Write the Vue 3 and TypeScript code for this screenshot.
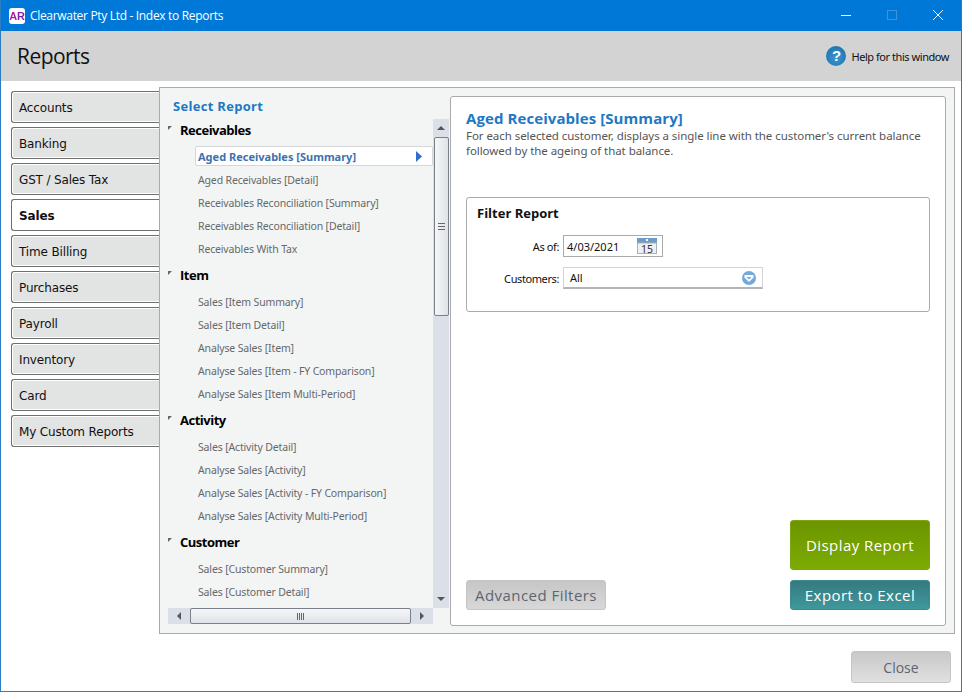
<script setup lang="ts">
const tabs = ['Accounts','Banking','GST / Sales Tax','Sales','Time Billing','Purchases','Payroll','Inventory','Card','My Custom Reports']
const groups = [
  { name: 'Receivables', items: ['Aged Receivables [Summary]','Aged Receivables [Detail]','Receivables Reconciliation [Summary]','Receivables Reconciliation [Detail]','Receivables With Tax'] },
  { name: 'Item', items: ['Sales [Item Summary]','Sales [Item Detail]','Analyse Sales [Item]','Analyse Sales [Item - FY Comparison]','Analyse Sales [Item Multi-Period]'] },
  { name: 'Activity', items: ['Sales [Activity Detail]','Analyse Sales [Activity]','Analyse Sales [Activity - FY Comparison]','Analyse Sales [Activity Multi-Period]'] },
  { name: 'Customer', items: ['Sales [Customer Summary]','Sales [Customer Detail]'] },
]
</script>

<template>
  <div class="window">
    <header class="titlebar">
      <span class="logo"><span class="logo-text">AR</span></span>
      <span class="title">Clearwater Pty Ltd - Index to Reports</span>
      <div class="controls">
        <svg class="ctl" width="46" height="31" viewBox="0 0 46 31"><path d="M18 15.5H28" stroke="#fff" fill="none"/></svg>
        <svg class="ctl" width="46" height="31" viewBox="0 0 46 31"><rect x="18.5" y="10.5" width="9" height="9" stroke="#3a93df" fill="none"/></svg>
        <svg class="ctl" width="46" height="31" viewBox="0 0 46 31"><path d="M18 10L28 20M28 10L18 20" stroke="#fff" fill="none"/></svg>
      </div>
    </header>
    <div class="head">
      <h1 class="reports">Reports</h1>
      <div class="help">
        <span class="help-icon">?</span>
        <span class="help-text">Help for this window</span>
      </div>
    </div>
    <main class="main">
      <nav class="tabs">
        <div v-for="t in tabs" :key="t" class="tab" :class="{ active: t === 'Sales' }">{{ t }}</div>
      </nav>
      <section class="panel">
        <div class="left">
          <div class="select-title">Select Report</div>
          <div class="list-grid">
            <div class="list">
              <div v-for="g in groups" :key="g.name" class="group">
                <div class="group-head">
                  <svg class="tri" width="4" height="4" viewBox="0 0 4 4"><path d="M0 0H4L0 4Z" fill="#666"/></svg>
                  <span>{{ g.name }}</span>
                </div>
                <div v-for="i in g.items" :key="i" class="item" :class="{ sel: i === 'Aged Receivables [Summary]' }">
                  <span>{{ i }}</span>
                  <svg v-if="i === 'Aged Receivables [Summary]'" width="6" height="11" viewBox="0 0 6 11"><path d="M0 0L6 5.5L0 11Z" fill="#2f6fd0"/></svg>
                </div>
              </div>
            </div>
            <div class="vscroll">
              <div class="sbtn"><svg width="8" height="4" viewBox="0 0 8 4"><path d="M4 0L8 4H0Z" fill="#555"/></svg></div>
              <div class="vtrack">
                <div class="vthumb"><span class="grip-h"></span></div>
              </div>
              <div class="sbtn"><svg width="8" height="4" viewBox="0 0 8 4"><path d="M0 0H8L4 4Z" fill="#555"/></svg></div>
            </div>
            <div class="hscroll">
              <div class="hbtn"><svg width="4" height="8" viewBox="0 0 4 8"><path d="M4 0V8L0 4Z" fill="#555"/></svg></div>
              <div class="hthumb"><span class="grip-v"></span></div>
              <div class="hbtn"><svg width="4" height="8" viewBox="0 0 4 8"><path d="M0 0V8L4 4Z" fill="#555"/></svg></div>
            </div>
          </div>
        </div>
        <div class="card">
          <h2 class="card-title">Aged Receivables [Summary]</h2>
          <p class="card-desc">For each selected customer, displays a single line with the customer's current balance<br>followed by the ageing of that balance.</p>
          <div class="filter">
            <div class="filter-title">Filter Report</div>
            <div class="field">
              <label class="lbl">As of:</label>
              <div class="date">
                <span>4/03/2021</span>
                <svg class="cal" width="20" height="20" viewBox="0 0 20 20">
                  <rect x="0" y="2" width="20" height="16" fill="#eef0f2"/>
                  <rect x="0" y="2" width="20" height="5" fill="#6c9cc8"/>
                  <rect x="9" y="3" width="2" height="2" fill="#fff"/>
                  <rect x="0.5" y="7" width="19" height="10.5" fill="none" stroke="#a8b0b8"/>
                  <text x="10" y="16.5" text-anchor="middle" class="cal-num">15</text>
                </svg>
              </div>
            </div>
            <div class="field">
              <label class="lbl">Customers:</label>
              <div class="combo">
                <span>All</span>
                <svg width="14" height="14" viewBox="0 0 14 14">
                  <circle cx="7" cy="7" r="7" fill="#74a9de"/>
                  <path d="M2.5 4H11.5V6.5L7 11L2.5 6.5Z" fill="#fff"/>
                  <path d="M4.5 6H9.5L7 8.5Z" fill="#74a9de"/>
                </svg>
              </div>
            </div>
          </div>
          <div class="spacer"></div>
          <div class="actions">
            <button class="btn adv">Advanced Filters</button>
            <div class="actions-right">
              <button class="btn display">Display Report</button>
              <button class="btn excel">Export to Excel</button>
            </div>
          </div>
        </div>
      </section>
    </main>
    <footer class="foot">
      <button class="btn close">Close</button>
    </footer>
  </div>
</template>

<style>
html, body { margin: 0; padding: 0; background: #fff; }
</style>

<style scoped>
.window {
  width: 962px; height: 692px; box-sizing: border-box;
  border: 1px solid #2a7cc4; border-top: 0;
  display: flex; flex-direction: column; overflow: hidden;
  background: #fff; font-family: "Open Sans", sans-serif; color: #000;
}
.titlebar {
  height: 31px; margin: 0 -1px; background: #0078d7; color: #fff;
  display: flex; align-items: center; padding-left: 9px; flex: none;
}
.logo {
  width: 16px; height: 16px; background: #fff; border-radius: 3px;
  display: flex; align-items: center; justify-content: center;
}
.logo-text {
  font: bold 11px "Liberation Sans", sans-serif; letter-spacing: -0.3px;
  background: linear-gradient(90deg, #c0188f, #6a25c0); -webkit-background-clip: text; background-clip: text; color: transparent;
}
.title { margin-left: 5px; font-size: 12px; letter-spacing: -0.32px; }
.controls { margin-left: auto; display: flex; padding-right: 1px; }
.ctl { display: block; }
.head {
  height: 50px; background: #d3d3d3; display: flex; align-items: center;
  padding: 0 12px 0 16px; flex: none;
}
.reports { margin: 0; font-size: 21px; font-weight: 400; color: #111; letter-spacing: -0.55px; }
.help { margin-left: auto; display: flex; align-items: center; gap: 5px; }
.help-icon {
  width: 20px; height: 20px; border-radius: 50%; background: radial-gradient(circle at 50% 60%, #3e96d0, #136ca8);
  color: #fff; font: bold 15px "Liberation Sans", sans-serif; text-align: center; line-height: 20px;
}
.help-text { font: 11px "Noto Sans", sans-serif; letter-spacing: -0.45px; color: #111; }
.main { flex: none; display: flex; padding: 6px 0 0 10px; min-height: 0; }
.tabs { width: 149px; flex: none; padding-top: 4px; display: flex; flex-direction: column; gap: 4px; }
.tab {
  height: 32px; box-sizing: border-box; border: 1px solid #6f6f6f; border-right: 0;
  border-radius: 3px 0 0 3px; background: #e2e3e3; box-shadow: inset 0 1px 0 #fff, inset 1px 0 0 #fff, inset 0 -1px 0 #fff;
  padding: 0 0 0 7px; font: 12px/32px "DejaVu Sans", sans-serif; letter-spacing: -0.15px; color: #111;
}
.tab.active { background: #fff; font-weight: 700; }
.panel {
  width: 796px; height: 547px; flex: none; box-sizing: border-box; position: relative; margin-left: -1px;
  border: 1px solid #aaa; background: #f3f5f5;
  display: flex; padding: 8px 2px 7px 8px;
}
.left { width: 282px; flex: none; display: flex; flex-direction: column; }
.select-title { height: 19px; padding-left: 5px; font: 700 13px/21px "Open Sans", sans-serif; letter-spacing: 0.3px; color: #1f78c1; }
.list-grid {
  flex: 1; display: grid; grid-template-columns: 265px 16px; grid-template-rows: 493px 16px; min-height: 0;
}
.list { overflow: hidden; }
.group-head {
  height: 30px; display: flex; align-items: center; font: 700 13px "Open Sans", sans-serif; letter-spacing: -0.5px; color: #000;
}
.tri { margin-right: 8px; margin-top: -4px; }
.item {
  height: 23px; box-sizing: border-box; margin-left: 27px; padding-left: 3px; padding-right: 10px;
  display: flex; align-items: center; justify-content: space-between;
  font: 10.5px "Noto Sans", sans-serif; letter-spacing: -0.15px; color: #66686a;
}
.item.sel {
  background: #fff; border: 1px solid #d6d8d8; border-radius: 2px; font-weight: 700; font-size: 11px; letter-spacing: 0; color: #3d72ae; padding-left: 2px;
  height: 20px; margin: 1px 0 2px 27px;
}
.vscroll {
  margin-top: 4px; background: #dbe0e8; display: flex; flex-direction: column;
}
.sbtn { height: 18px; display: flex; align-items: center; justify-content: center; flex: none; }
.vtrack { flex: 1; }
.vthumb {
  height: 179px; margin-left: 1px; box-sizing: border-box; border: 1px solid #7a8088; border-radius: 2px;
  background: linear-gradient(90deg, #f5f6f8, #dfe2e8); display: flex; align-items: center; justify-content: center;
}
.grip-h { width: 7px; height: 5px; border-top: 1px solid #666; border-bottom: 1px solid #666; background: linear-gradient(#666,#666) center/100% 1px no-repeat; }
.hscroll { background: #dbe0e8; display: flex; align-items: stretch; }
.hbtn { width: 22px; display: flex; align-items: center; justify-content: center; flex: none; }
.hthumb {
  flex: 1; box-sizing: border-box; border: 1px solid #7a8088; border-radius: 2px;
  background: linear-gradient(#f5f6f8, #dfe2e8); display: flex; align-items: center; justify-content: center;
}
.grip-v { width: 7px; height: 7px; background: repeating-linear-gradient(90deg, #666 0 1px, transparent 1px 2px); }
.card {
  width: 496px; height: 530px; box-sizing: border-box; border: 1px solid #aaa; border-radius: 3px; background: #fff;
  display: flex; flex-direction: column; padding: 12px 15px 15px;
}
.card-title { margin: 0; font: 700 15px/19px "Open Sans", sans-serif; letter-spacing: 0.08px; color: #1f78c1; }
.card-desc { margin: 0; font: 11.5px/15px "Noto Sans", sans-serif; letter-spacing: -0.06px; color: #555; }
.filter {
  margin-top: 39px; height: 115px; box-sizing: border-box; border: 1px solid #aaa; border-radius: 3px; padding: 6px 10px 0 10px;
}
.filter-title { font: 700 13px/18px "Open Sans", sans-serif; color: #111; margin-bottom: 13px; }
.field { display: flex; align-items: center; height: 22px; margin-bottom: 10px; }
.lbl { width: 82px; text-align: right; margin-right: 4px; font: 11px "Noto Sans", sans-serif; letter-spacing: -0.4px; color: #111; }
.date {
  width: 100px; height: 22px; box-sizing: border-box; border: 1px solid #aaa; display: flex; align-items: center; justify-content: space-between;
  padding: 0 5px 0 3px; font: 11px "Noto Sans", sans-serif; color: #111;
}
.cal-num { font: 10.5px "Noto Sans", sans-serif; fill: #333; }
.combo {
  width: 200px; height: 22px; box-sizing: border-box; border: 1px solid #d4d4d4; border-bottom: 2px solid #b4b4b4; display: flex; align-items: center; justify-content: space-between;
  padding: 0 6px; font: 11px "Noto Sans", sans-serif; color: #111;
}
.spacer { flex: 1; }
.actions { display: flex; align-items: flex-end; justify-content: space-between; }
.actions-right { display: flex; flex-direction: column; gap: 10px; }
.btn { border: 1px solid transparent; border-radius: 3px; padding: 0; font-family: "Open Sans", sans-serif; letter-spacing: 0.45px; }
.adv {
  width: 140px; height: 30px; font-size: 15px; color: #5c6670; border-color: #c4c4c4;
  background: linear-gradient(#c6c6c6, #d8d8d8);
}
.display {
  width: 140px; height: 50px; font-size: 15px; color: #fff; border-color: #7ca612;
  background: linear-gradient(#6c9500, #7cab02);
}
.excel {
  width: 140px; height: 30px; font-size: 15px; color: #fff; border-color: #3d8a90;
  background: linear-gradient(#357a80, #3f989c);
}
.foot { flex: 1; display: flex; justify-content: flex-end; align-items: flex-start; padding: 17px 10px 0 0; }
.close {
  width: 100px; height: 32px; font-size: 14px; letter-spacing: 0; color: #5c6670; border-color: #c4c4c4;
  background: linear-gradient(#c8c8c8, #e0e0e0);
}
</style>
